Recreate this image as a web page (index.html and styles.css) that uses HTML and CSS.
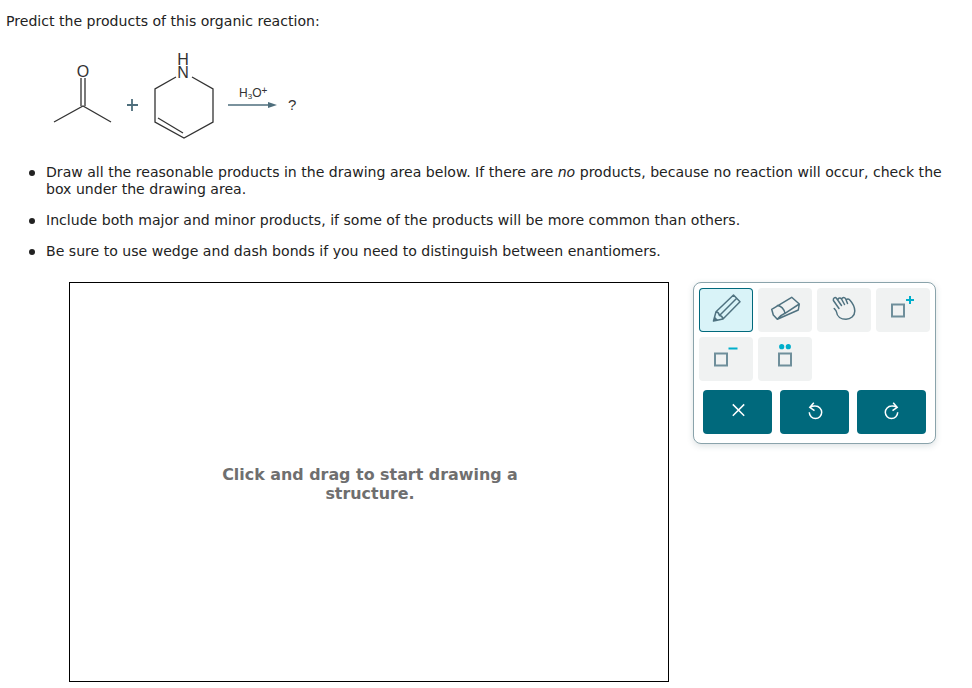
FILE: index.html
```html
<!DOCTYPE html>
<html lang="en">

<head>
    <meta charset="UTF-8">
    <meta name="viewport" content="width=device-width, initial-scale=1.0">
    <title>Predict the products</title>
    <link rel="stylesheet" href="styles.css">
</head>

<body>
    <p class="question">Predict the products of this organic reaction:</p>

    <svg class="reaction" width="320" height="100" viewBox="0 40 320 100">
        <g class="bond">
            <path d="M54 122 L83 106 L111 122" />
            <path d="M81 78 V106 M85 78 V106" />
            <path d="M176 77 L155 89 V122 L184 138 L213 122 V89 L192 77" />
            <path d="M158 118 L183 133" />
        </g>
        <text class="atom" x="83" y="77">O</text>
        <text class="atom" x="183" y="65">H</text>
        <text class="atom" x="183" y="77.5">N</text>
        <path class="plus" d="M132 99 V111 M127 105 H138" />
        <text class="reagent" x="239" y="97">H<tspan class="sub" dy="2">3</tspan><tspan dy="-2">O</tspan><tspan class="sup" dy="-3">+</tspan></text>
        <path class="arrow-line" d="M228 105 H272" />
        <path class="arrow-head" d="M277 105 L268 102 V108 Z" />
        <text class="unknown" x="288" y="110">?</text>
    </svg>

    <ul class="notes">
        <li>Draw all the reasonable products in the drawing area below. If there are <em>no</em> products, because no reaction will occur, check the box under the drawing area.</li>
        <li>Include both major and minor products, if some of the products will be more common than others.</li>
        <li>Be sure to use wedge and dash bonds if you need to distinguish between enantiomers.</li>
    </ul>

    <div class="workspace">
        <div class="canvas">
            <p class="hint">Click and drag to start drawing a structure.</p>
        </div>

        <div class="toolbar">
            <div class="tools">
                <button class="tool selected" title="Draw">
                    <svg width="54" height="44" viewBox="0 0 54 44">
                        <path class="ink" d="M34.5 7 L41 13.7 L24 31 L14.5 33 L17 23.7 Z M17 23.7 C19 24 20 25 20.5 27.5 C22 27.5 23.5 29 24 31 M20.5 27.5 L37.5 10.5" />
                        <path class="ink-fill" d="M14.5 33 L15.6 28.6 L19 32 Z" />
                    </svg>
                </button>
                <button class="tool" title="Erase">
                    <svg width="54" height="44" viewBox="0 0 54 44">
                        <path class="ink" d="M13.7 21.3 L33.7 9.3 L41.3 16 L40.3 22 L19.3 31.3 L15.3 27 Z M19.3 17.5 C23 18 26 21 27 25.3 L41.3 16 M27 25.3 C24 26.5 21.5 28.5 19.3 31.3" />
                    </svg>
                </button>
                <button class="tool" title="Move">
                    <svg width="54" height="44" viewBox="0 0 54 44">
                        <path class="ink" d="M22 20.5 L16.4 12.5 C15.8 10 18.2 8.6 19.6 10.5 L24.5 17.5 M21 11.5 C21.5 9.5 23.5 9.5 24.5 11 L27.5 16.5 M25 10.5 C25.5 9 27.7 9 28.5 10.5 L30.5 15.5 M29.3 11.8 C30.3 10.5 32 10.8 32.8 12 C35.5 15 37.8 19 37.8 23 C37.8 28 33.5 31.2 29 31.2 C24 31.2 20 28.5 19.5 24 C19.3 22.5 18 21.5 17.2 20.5" />
                    </svg>
                </button>
                <button class="tool" title="Add charge">
                    <svg width="54" height="44" viewBox="0 0 54 44">
                        <rect class="atom-box" x="16" y="16.5" width="12" height="12" />
                        <path class="accent" d="M34 8 V16 M30 12 H38" />
                    </svg>
                </button>
                <button class="tool" title="Remove charge">
                    <svg width="54" height="44" viewBox="0 0 54 44">
                        <rect class="atom-box" x="16" y="16.5" width="12" height="12" />
                        <path class="accent" d="M29.5 11.5 H38.5" />
                    </svg>
                </button>
                <button class="tool" title="Lone pair">
                    <svg width="54" height="44" viewBox="0 0 54 44">
                        <rect class="atom-box" x="21" y="16.5" width="12" height="12" />
                        <circle class="dot" cx="23.7" cy="9.7" r="2.6" />
                        <circle class="dot" cx="30.3" cy="9.7" r="2.6" />
                    </svg>
                </button>
            </div>

            <div class="actions">
                <button class="action" title="Clear">
                    <svg width="18" height="20" viewBox="0 0 18 20">
                        <path d="M3.8 2.4 L15.2 13.7 M15.2 2.4 L3.8 13.7" />
                    </svg>
                </button>
                <button class="action" title="Undo">
                    <svg width="18" height="20" viewBox="0 0 18 20">
                        <path d="M7.8 0.7 L3.8 5.3 L8.5 8.7 M4.5 5 C6 4.2 7.5 4 9.5 4.1 A6.2 6.2 0 1 1 3.3 10.3" />
                    </svg>
                </button>
                <button class="action" title="Redo">
                    <svg width="18" height="20" viewBox="0 0 18 20">
                        <path d="M10.2 0.7 L14.2 5.3 L9.5 8.7 M13.5 5 C12 4.2 10.5 4 8.5 4.1 A6.2 6.2 0 1 0 14.7 10.3" />
                    </svg>
                </button>
            </div>
        </div>
    </div>
</body>

</html>
```

FILE: styles.css
```css
body {
    margin: 0;
    padding: 0 6px;
    font-family: Verdana, "DejaVu Sans", sans-serif;
    font-size: 14.08px;
    line-height: 17px;
    color: #222;
    background-color: white;
}

.question {
    margin: 0;
    padding-top: 13px;
}

/* reaction scheme */
.reaction {
    display: block;
    margin: 10px 0 0 -6px;
}

.bond path {
    fill: none;
    stroke: #333;
    stroke-width: 1.3;
}

.atom,
.reagent,
.unknown {
    font-family: "Liberation Sans", Arial, sans-serif;
    fill: #333;
}

.atom {
    font-size: 16px;
    text-anchor: middle;
}

.reagent {
    font-size: 12px;
}

.reagent .sub {
    font-size: 8px;
}

.reagent .sup {
    font-size: 10px;
}

.unknown {
    font-size: 15px;
}

.plus {
    fill: none;
    stroke: #4e6e7c;
    stroke-width: 1.8;
}

.arrow-line {
    fill: none;
    stroke: #4e6e7c;
    stroke-width: 1.5;
}

.arrow-head {
    fill: #4e6e7c;
}

/* instructions */
.notes {
    margin: 24px 0 0;
    padding: 0 0 0 40px;
    list-style: none;
}

.notes li {
    position: relative;
    margin-bottom: 14px;
}

.notes li::before {
    content: "";
    position: absolute;
    left: -17px;
    top: 6px;
    width: 6px;
    height: 6px;
    border-radius: 50%;
    background-color: #222;
}

.notes li:last-child {
    margin-bottom: 0;
}

/* drawing area */
.workspace {
    display: flex;
    align-items: flex-start;
    gap: 24px;
    margin: 22px 0 0 63px;
}

.canvas {
    box-sizing: border-box;
    width: 600px;
    height: 400px;
    border: 1px solid black;
    display: flex;
    align-items: center;
    justify-content: center;
}

.hint {
    margin: 0;
    width: 310px;
    padding: 4px 0 0 2px;
    font-size: 15.9px;
    line-height: 19px;
    font-weight: bold;
    text-align: center;
    color: #6f6f6f;
}

.toolbar {
    box-sizing: border-box;
    width: 243px;
    height: 162px;
    padding: 5px;
    border: 1px solid #8aa3ab;
    border-radius: 8px;
    background: white;
    box-shadow: 0 2px 6px rgba(60, 90, 100, 0.18);
}

.tools {
    display: grid;
    grid-template-columns: repeat(4, 54px);
    grid-auto-rows: 44px;
    gap: 5px;
}

button {
    margin: 0;
    padding: 0;
    border: none;
    cursor: pointer;
}

.tool {
    box-sizing: border-box;
    border-radius: 4px;
    background-color: #f0f2f2;
}

.tool svg,
.action svg {
    display: block;
}

.tool.selected {
    background-color: #d9f3f8;
    box-shadow: inset 0 0 0 1px #00697c;
}

.ink {
    fill: none;
    stroke: #4f7280;
    stroke-width: 1.5;
    stroke-linejoin: round;
    stroke-linecap: round;
}

.ink-fill {
    fill: #4f7280;
}

.atom-box {
    fill: none;
    stroke: #6f8f9b;
    stroke-width: 2;
}

.accent {
    fill: none;
    stroke: #00aecb;
    stroke-width: 2;
}

.dot {
    fill: #00aecb;
}

.actions {
    display: flex;
    gap: 8px;
    margin: 9px 0 0 4px;
}

.action {
    width: 69px;
    height: 44px;
    border-radius: 4px;
    background-color: #00697c;
    display: flex;
    align-items: center;
    justify-content: center;
}

.action path {
    fill: none;
    stroke: white;
    stroke-width: 1.5;
}
```
